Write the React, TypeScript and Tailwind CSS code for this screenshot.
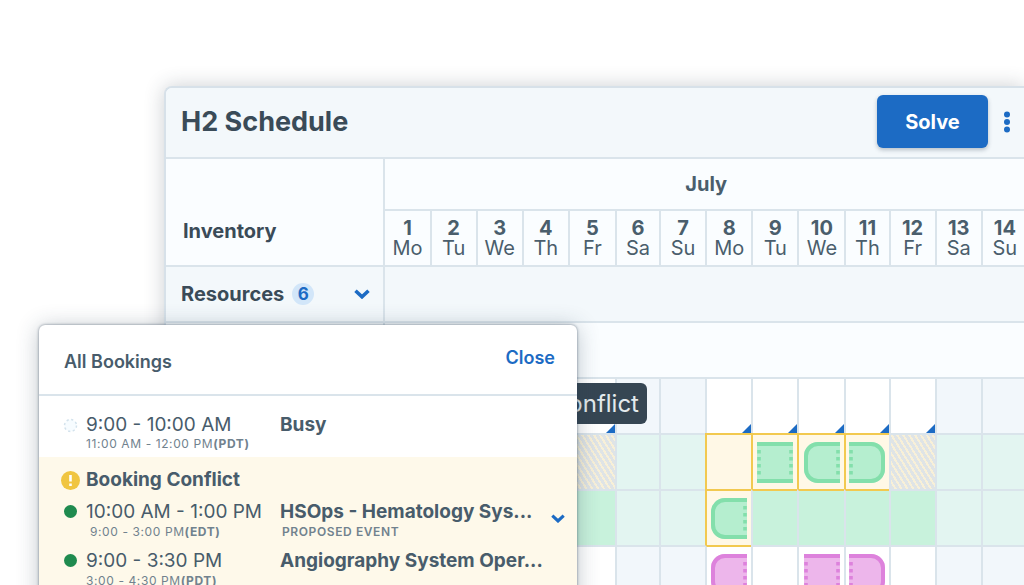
import { clsx } from "clsx";

type Tone = "green" | "pink";
type Shape = "start" | "middle" | "end";
type Cell = {
  fill: "white" | "weekend" | "mint" | "green" | "hatch" | "conflict";
  chip?: { tone: Tone; shape: Shape };
  corner?: boolean;
};

const days = [
  { n: 1, name: "Mo", col: "w-[46px]" },
  { n: 2, name: "Tu", col: "w-[46px]" },
  { n: 3, name: "We", col: "w-[46px]" },
  { n: 4, name: "Th", col: "w-[46px]" },
  { n: 5, name: "Fr", col: "w-[47px]" },
  { n: 6, name: "Sa", col: "w-[44px]" },
  { n: 7, name: "Su", col: "w-[46px]" },
  { n: 8, name: "Mo", col: "w-[46px]" },
  { n: 9, name: "Tu", col: "w-[46px]" },
  { n: 10, name: "We", col: "w-[47px]" },
  { n: 11, name: "Th", col: "w-[44px]" },
  { n: 12, name: "Fr", col: "w-[46px]" },
  { n: 13, name: "Sa", col: "w-[46px]" },
  { n: 14, name: "Su", col: "w-[46px]" },
];

const white: Cell = { fill: "white" };
const open: Cell = { fill: "white", corner: true };
const weekend: Cell = { fill: "weekend" };
const mint: Cell = { fill: "mint" };
const green: Cell = { fill: "green" };
const hatch: Cell = { fill: "hatch" };

const conflict = (shape?: Shape): Cell => ({
  fill: "conflict",
  chip: shape && { tone: "green", shape },
});
const pink = (shape: Shape): Cell => ({
  fill: "white",
  chip: { tone: "pink", shape },
});

const rows: Cell[][] = [
  [open, open, open, open, open, weekend, weekend, open, open, open, open, open, weekend, weekend],
  [hatch, hatch, hatch, hatch, hatch, mint, mint, conflict(), conflict("middle"), conflict("start"), conflict("end"), hatch, mint, mint],
  [green, green, green, green, green, mint, mint, conflict("start"), green, green, green, green, mint, mint],
  [white, white, white, white, white, weekend, weekend, pink("start"), white, pink("middle"), pink("end"), white, weekend, weekend],
];

const fills = {
  white: "bg-white",
  weekend: "bg-[#f2f7fb]",
  mint: "bg-[#e3f5f1]",
  green: "bg-[#c8f2dc]",
  hatch:
    "bg-[repeating-linear-gradient(58deg,#dfe4e6_0px,#dfe4e6_3px,#f8f0d8_3px,#f8f0d8_5px)]",
  conflict: "bg-[#fff8e6]",
};

const chipFills = {
  green: { body: "#b5eecf", edge: "#83dfab" },
  pink: { body: "#edb6eb", edge: "#dd82dc" },
};

// rounded side = booking starts/ends there, dotted side = it carries on
function Chip({ tone, shape }: { tone: Tone; shape: Shape }) {
  const { body, edge } = chipFills[tone];
  const bodyPath = {
    start: "M36 0H14A14 14 0 0 0 0 14V27A14 14 0 0 0 14 41H36Z",
    middle: "M0 0H36V41H0Z",
    end: "M0 0H22A14 14 0 0 1 36 14V27A14 14 0 0 1 22 41H0Z",
  }[shape];
  const edgePath = {
    start: "M36 2H14A12 12 0 0 0 2 14V27A12 12 0 0 0 14 39H36",
    middle: "M0 2H36M0 39H36",
    end: "M0 2H22A12 12 0 0 1 34 14V27A12 12 0 0 1 22 39H0",
  }[shape];
  return (
    <svg className="mx-auto block" width="36" height="41" viewBox="0 0 36 41" fill="none">
      <path d={bodyPath} fill={body} />
      <path d={edgePath} stroke={edge} strokeWidth="4" />
      {shape !== "start" && (
        <path d="M2 8V36" stroke={edge} strokeWidth="3.6" strokeDasharray="3.6 3.4" />
      )}
      {shape !== "end" && (
        <path d="M34 8V36" stroke={edge} strokeWidth="3.6" strokeDasharray="3.6 3.4" />
      )}
    </svg>
  );
}

function Chevron({ className }: { className?: string }) {
  return (
    <svg className={className} viewBox="0 0 16 10" fill="none">
      <path d="M1.5 1.8L8 7.8L14.5 1.8" stroke="#1c6bc4" strokeWidth="3.6" />
    </svg>
  );
}

function DayCell({ r, c }: { r: number; c: number }) {
  const cell = rows[r][c];
  const isConflict = cell.fill === "conflict";
  const belowConflict = r > 0 && rows[r - 1][c].fill === "conflict";
  return (
    <td
      className={clsx(
        "relative h-[56px] border-l-2 border-t-2 p-0",
        fills[cell.fill],
        isConflict ? "border-l-[#f2c94f]" : "border-l-[#dae4eb]",
        isConflict || belowConflict ? "border-t-[#f2c94f]" : "border-t-[#dae4eb]"
      )}
    >
      {cell.chip && <Chip {...cell.chip} />}
      {cell.corner && (
        <svg className="absolute right-0 bottom-0" width="9" height="9" viewBox="0 0 9 9">
          <path d="M9 0V9H0Z" fill="#1c6bc4" />
        </svg>
      )}
      {r === 0 && c === 4 && (
        <span
          role="tooltip"
          className="absolute top-1 right-[-32px] z-10 rounded-md bg-[#364653] px-2 text-[24px] leading-[41px] text-[#e4eaed]"
        >
          Conflict
        </span>
      )}
    </td>
  );
}

function Schedule() {
  return (
    <section className="overflow-hidden rounded-tl-lg border-t-2 border-l-2 border-[#d7e1e9] bg-[#fafdff] shadow-[0_0_20px_rgba(40,55,65,0.24)]">
      <header className="flex h-[69px] items-center bg-[#f3f8fb] pb-[2px] pl-[15px]">
        <h1 className="flex-1 text-[27px] leading-8 font-bold text-[#3a4b58]">H2 Schedule</h1>
        <button
          type="button"
          className="h-[53px] w-[111px] rounded-md bg-[#1c6bc4] text-[20px] font-bold text-white shadow-[0_2px_4px_rgba(40,60,80,0.3)]"
        >
          Solve
        </button>
        <button type="button" aria-label="More actions" className="flex h-10 w-9 items-center justify-center pl-[2px]">
          <svg width="6" height="22" viewBox="0 0 6 22" fill="#1c6bc4">
            <circle cx="3" cy="3.5" r="3" />
            <circle cx="3" cy="11" r="3" />
            <circle cx="3" cy="18.5" r="3" />
          </svg>
        </button>
      </header>
      <table className="w-[861px] table-fixed border-separate border-spacing-0">
        <colgroup>
          <col className="w-[217px]" />
          {days.map((d) => (
            <col key={d.n} className={d.col} />
          ))}
        </colgroup>
        <thead className="text-[#4a5e6c]">
          <tr>
            <th
              rowSpan={2}
              className="border-t-2 border-[#dae4eb] pr-0 pb-5 pl-[17px] text-left align-bottom text-[20px] leading-7 font-bold text-[#3a4b58]"
            >
              Inventory
            </th>
            <th colSpan={14} className="h-[52px] border-t-2 border-l-2 border-[#dae4eb] p-0 text-[20px] leading-6 font-bold">
              July
            </th>
          </tr>
          <tr>
            {days.map((d) => (
              <th key={d.n} className="h-[56px] border-t-2 border-l-2 border-[#dae4eb] p-0 text-[20px] leading-5 font-normal">
                <span className="block font-bold">{d.n}</span>
                {d.name}
              </th>
            ))}
          </tr>
        </thead>
        <tbody>
          <tr className="bg-[#f3f8fb]">
            <th className="h-[56px] border-t-2 border-[#dae4eb] py-0 pr-[13px] pl-[15px]">
              <div className="flex items-center text-[20px] leading-7 font-bold text-[#3a4b58]">
                Resources
                <span className="ml-2 size-[22px] rounded-full bg-[#d2e6f9] text-center text-[17px] leading-[22px] font-bold text-[#1c6bc4]">
                  6
                </span>
                <button type="button" aria-label="Toggle resources" className="ml-auto">
                  <Chevron className="h-[10px] w-4" />
                </button>
              </div>
            </th>
            <td colSpan={14} className="border-t-2 border-l-2 border-[#dae4eb]" />
          </tr>
          <tr>
            <td className="h-[56px] border-t-2 border-[#dae4eb]" />
            <td colSpan={14} className="border-t-2 border-l-2 border-[#dae4eb]" />
          </tr>
          {rows.map((row, r) => (
            <tr key={r}>
              <td className="border-t-2 border-[#dae4eb]" />
              {row.map((_, c) => (
                <DayCell key={c} r={r} c={c} />
              ))}
            </tr>
          ))}
        </tbody>
      </table>
    </section>
  );
}

const conflicts = [
  { time: "10:00 AM - 1:00 PM", local: "9:00 - 3:00 PM", zone: "EDT", title: "HSOps - Hematology Sys...", note: "Proposed event" },
  { time: "9:00 - 3:30 PM", local: "3:00 - 4:30 PM", zone: "PDT", title: "Angiography System Oper..." },
];

function Bookings() {
  return (
    <aside className="absolute top-[325px] left-[39px] z-20 w-[538px] overflow-hidden rounded-md bg-white text-[#485c6b] shadow-[0_0_3px_rgba(40,60,80,0.6),0_2px_22px_rgba(40,60,80,0.3)]">
      <header className="flex h-[71px] items-center justify-between border-b-2 border-[#dae4eb] pr-[22px] pl-[25px]">
        <h2 className="pt-1 text-[18px] leading-6 font-semibold">All Bookings</h2>
        <button type="button" className="pb-1 text-[18px] leading-6 font-semibold text-[#1c6bc4]">
          Close
        </button>
      </header>

      <div className="grid grid-cols-[47px_194px_1fr] pt-[18px] pb-[6px]">
        <svg className="mt-1 ml-6" width="15" height="15" viewBox="0 0 15 15">
          <circle cx="7.5" cy="7.5" r="6" fill="#f7fcff" stroke="#d3e2ec" strokeWidth="1.5" strokeDasharray="2.2 2.5" />
        </svg>
        <div>
          <p className="text-[19px] leading-[22px]">9:00 - 10:00 AM</p>
          <p className="text-[12px] leading-[15px] tracking-wider text-[#71828e]">
            11:00 AM - 12:00 PM<b className="font-bold">(PDT)</b>
          </p>
        </div>
        <p className="text-[19px] leading-[22px] font-bold">Busy</p>
      </div>

      <div className="bg-[#fef9ea] pt-3 pb-6">
        <h3 className="flex items-center text-[19px] leading-[22px] font-bold">
          <svg className="mr-[6px] ml-[22px]" width="19" height="19" viewBox="0 0 19 19">
            <circle cx="9.5" cy="9.5" r="9.5" fill="#f0c541" />
            <path d="M9.5 4V10.5M9.5 12.5V15" stroke="#fff" strokeWidth="2.6" />
          </svg>
          Booking Conflict
        </h3>
        <ul className="mt-[10px] flex flex-col gap-[10px]">
          {conflicts.map((b) => (
            <li key={b.time} className="grid grid-cols-[47px_194px_1fr_auto]">
              <span className="mt-1 ml-[25px] size-[13px] rounded-full bg-[#1f8b4f]" />
              <div>
                <p className="text-[19px] leading-[22px]">{b.time}</p>
                <p className={clsx("mt-px text-[12px] leading-4 tracking-wider text-[#71828e]", b.note && "pl-1")}>
                  {b.local}
                  <b className="font-bold">({b.zone})</b>
                </p>
              </div>
              <div>
                <p className="text-[19px] leading-[22px] font-bold">{b.title}</p>
                {b.note && (
                  <p className="mt-px pl-[2px] text-[12px] leading-4 font-semibold tracking-wider text-[#71828e] uppercase">
                    {b.note}
                  </p>
                )}
              </div>
              {b.note && (
                <button type="button" aria-label="Show details" className="mr-3 mb-1 self-center">
                  <Chevron className="h-[9px] w-[14px]" />
                </button>
              )}
            </li>
          ))}
        </ul>
      </div>
    </aside>
  );
}

export default function App() {
  return (
    <main className="relative h-screen overflow-hidden bg-white pt-[86px] pl-[164px] font-['Inter','Liberation_Sans',sans-serif]">
      <Schedule />
      <Bookings />
    </main>
  );
}
